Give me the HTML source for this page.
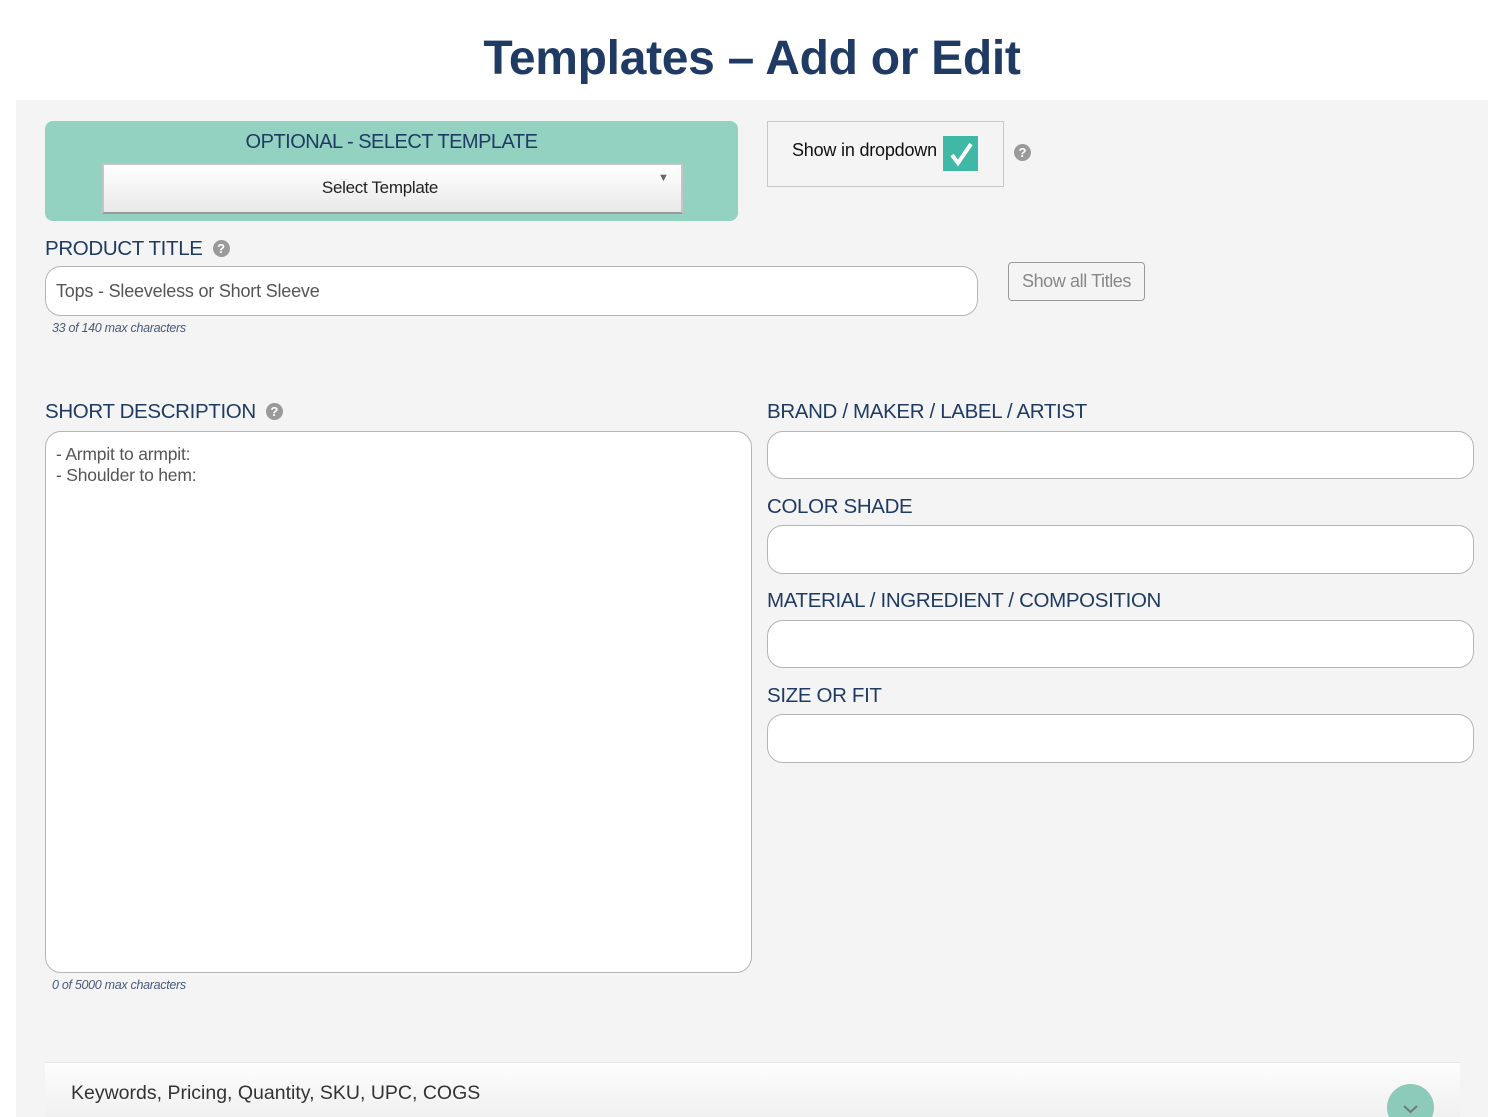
<!DOCTYPE html>
<html><head><meta charset="utf-8"><style>
*{box-sizing:border-box;margin:0;padding:0}
html,body{width:1500px;height:1117px;overflow:hidden}
body{background:#fff;position:relative;font-family:"Liberation Sans",sans-serif;}
.a{position:absolute}
h1{position:absolute;left:0;width:1504px;top:31px;text-align:center;font-weight:bold;font-size:48px;color:#1f3b63;letter-spacing:-0.3px}
.panel{left:16px;top:100px;width:1472px;height:1017px;background:#f4f4f4}
.lbl{color:#1f3b63;font-size:20.5px;letter-spacing:-0.35px}
.inp{background:#fff;border:1.5px solid #b5b5b5;border-radius:16px}
.q{display:inline-block;width:17px;height:17px;border-radius:50%;background:#9a9a9a;color:#fff;font:bold 13px/17px "Liberation Sans",sans-serif;text-align:center;vertical-align:2px;margin-left:10px;letter-spacing:0}
.small{font-style:italic;font-size:12.5px;color:#4a5a78;letter-spacing:-0.3px}
</style></head><body>
<h1>Templates – Add or Edit</h1>
<div class="a panel"></div>
<div class="a" style="left:45px;top:121px;width:693px;height:100px;background:#93d2c1;border-radius:8px"></div>
<div class="a lbl" style="left:45px;top:131px;width:693px;text-align:center;font-size:20px;letter-spacing:-0.5px">OPTIONAL - SELECT TEMPLATE</div>
<div class="a" style="left:102px;top:163px;width:581px;height:51px;background:linear-gradient(#fff,#f2f2f2 60%,#e8e8e8);border:2px solid #c4c4c4;border-bottom-color:#999"></div>
<div class="a" style="left:102px;top:178px;width:556px;text-align:center;font-size:17px;letter-spacing:-0.3px;color:#222">Select Template</div>
<div class="a" style="left:658px;top:172px;font-size:11px;color:#666">▼</div>
<div class="a" style="left:767px;top:121px;width:237px;height:66px;border:1.5px solid #c8c8c8;background:#f4f4f4"></div>
<div class="a" style="left:792px;top:140px;font-size:18px;letter-spacing:-0.2px;color:#111">Show in dropdown</div>
<div class="a" style="left:943px;top:136px;width:35px;height:35px;background:#3fb8a6"><svg width="35" height="35"><path d="M9 19 L15 27 L28 8" stroke="#fff" stroke-width="4" fill="none"/></svg></div>
<div class="a" style="left:1004px;top:144px"><span class="q">?</span></div>
<div class="a lbl" style="left:45px;top:237px">PRODUCT TITLE<span class="q">?</span></div>
<div class="a inp" style="left:45px;top:266px;width:933px;height:50px"></div>
<div class="a" style="left:56px;top:281px;font-size:18px;letter-spacing:-0.2px;color:#555">Tops - Sleeveless or Short Sleeve</div>
<div class="a small" style="left:52px;top:321px">33 of 140 max characters</div>
<div class="a" style="left:1008px;top:262px;width:137px;height:39px;border:1.5px solid #999;border-radius:4px;font-size:18px;letter-spacing:-0.4px;color:#888;text-align:center;line-height:36px">Show all Titles</div>
<div class="a lbl" style="left:45px;top:400px">SHORT DESCRIPTION<span class="q">?</span></div>
<div class="a inp" style="left:45px;top:431px;width:707px;height:542px"></div>
<div class="a" style="left:56px;top:444px;font-size:17.5px;letter-spacing:-0.2px;color:#555;line-height:21px">- Armpit to armpit:<br>- Shoulder to hem:</div>
<div class="a small" style="left:52px;top:978px">0 of 5000 max characters</div>
<div class="a lbl" style="left:767px;top:400px">BRAND / MAKER / LABEL / ARTIST</div>
<div class="a inp" style="left:767px;top:431px;width:707px;height:48px"></div>
<div class="a lbl" style="left:767px;top:495px">COLOR SHADE</div>
<div class="a inp" style="left:767px;top:525px;width:707px;height:49px"></div>
<div class="a lbl" style="left:767px;top:589px">MATERIAL / INGREDIENT / COMPOSITION</div>
<div class="a inp" style="left:767px;top:620px;width:707px;height:48px"></div>
<div class="a lbl" style="left:767px;top:684px">SIZE OR FIT</div>
<div class="a inp" style="left:767px;top:714px;width:707px;height:49px"></div>
<div class="a" style="left:45px;top:1062px;width:1415px;height:55px;background:linear-gradient(#fdfdfd,#f0f0f0);border-top:1px solid #e6e6e6"></div>
<div class="a" style="left:71px;top:1082px;font-size:19.5px;letter-spacing:0px;color:#333">Keywords, Pricing, Quantity, SKU, UPC, COGS</div>
<div class="a" style="left:1387px;top:1084px;width:47px;height:47px;border-radius:50%;background:#8ccbb9"><svg width="47" height="33"><path d="M17 22 L23.5 28 L30 22" stroke="#777" stroke-width="2" fill="none"/></svg></div>
</body></html>
